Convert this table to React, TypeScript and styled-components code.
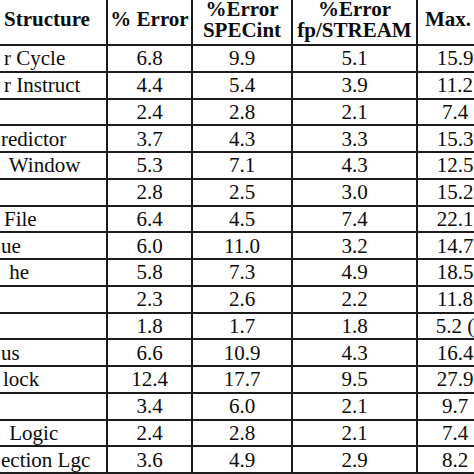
import React from "react";
import styled, { createGlobalStyle } from "styled-components";

const GlobalStyle = createGlobalStyle`
  html, body {
    margin: 0;
    padding: 0;
    background: #fff;
  }
  body {
    width: 474px;
    height: 474px;
    overflow: hidden;
  }
`;

const Page = styled.div`
  width: 474px;
  height: 474px;
  overflow: hidden;
  background: #fff;
`;

const Table = styled.table`
  border-collapse: collapse;
  table-layout: fixed;
  width: 496px;
  margin: -9px 0 0 -4px;
  font-family: "Liberation Serif", "Times New Roman", serif;
  font-size: 21px;
  color: #0c0c0c;
`;

const Head = styled.th<{ $align?: "left" | "center"; $indent?: number }>`
  height: 49px;
  padding: 2px 0 0 ${(p) => p.$indent ?? 0}px;
  border: 2px solid #1c1c1c;
  font-weight: bold;
  line-height: 21px;
  text-align: ${(p) => p.$align ?? "center"};
  vertical-align: middle;
  white-space: nowrap;
  overflow: hidden;
`;

const Row = styled.tr`
  height: 26.75px;
`;

const Cell = styled.td<{ $align?: "left" | "center"; $indent?: number }>`
  padding: 0 0 0 ${(p) => p.$indent ?? 0}px;
  border: 2px solid #1c1c1c;
  line-height: 22px;
  text-align: ${(p) => p.$align ?? "center"};
  vertical-align: middle;
  white-space: pre;
  overflow: hidden;
`;

type Entry = {
  name: string;
  indent: number;
  err: string;
  spec: string;
  fp: string;
  max: string;
};

const rows: Entry[] = [
  { name: "r Cycle", indent: 6, err: "6.8", spec: "9.9", fp: "5.1", max: "15.9" },
  { name: "r Instruct", indent: 6, err: "4.4", spec: "5.4", fp: "3.9", max: "11.2" },
  { name: "", indent: 0, err: "2.4", spec: "2.8", fp: "2.1", max: "7.4" },
  { name: "redictor", indent: 3, err: "3.7", spec: "4.3", fp: "3.3", max: "15.3" },
  { name: " Window", indent: 6, err: "5.3", spec: "7.1", fp: "4.3", max: "12.5" },
  { name: "", indent: 0, err: "2.8", spec: "2.5", fp: "3.0", max: "15.2" },
  { name: "File", indent: 6, err: "6.4", spec: "4.5", fp: "7.4", max: "22.1" },
  { name: "ue", indent: 3, err: "6.0", spec: "11.0", fp: "3.2", max: "14.7" },
  { name: " he", indent: 6, err: "5.8", spec: "7.3", fp: "4.9", max: "18.5" },
  { name: "", indent: 0, err: "2.3", spec: "2.6", fp: "2.2", max: "11.8" },
  { name: "", indent: 0, err: "1.8", spec: "1.7", fp: "1.8", max: "5.2 (" },
  { name: "us", indent: 3, err: "6.6", spec: "10.9", fp: "4.3", max: "16.4" },
  { name: "lock", indent: 5, err: "12.4", spec: "17.7", fp: "9.5", max: "27.9" },
  { name: "", indent: 0, err: "3.4", spec: "6.0", fp: "2.1", max: "9.7" },
  { name: " Logic", indent: 6, err: "2.4", spec: "2.8", fp: "2.1", max: "7.4" },
  { name: "ection Lgc", indent: 3, err: "3.6", spec: "4.9", fp: "2.9", max: "8.2" },
];

export default function App() {
  return (
    <Page>
      <GlobalStyle />
      <Table>
        <colgroup>
          <col style={{ width: 110 }} />
          <col style={{ width: 85 }} />
          <col style={{ width: 100 }} />
          <col style={{ width: 125 }} />
          <col style={{ width: 76 }} />
        </colgroup>
        <thead>
          <tr>
            <Head $align="left" $indent={6}>Structure</Head>
            <Head>% Error</Head>
            <Head>
              %Error
              <br />
              SPECint
            </Head>
            <Head>
              %Error
              <br />
              fp/STREAM
            </Head>
            <Head $align="left" $indent={7}>Max.</Head>
          </tr>
        </thead>
        <tbody>
          {rows.map((r, i) => (
            <Row key={i}>
              <Cell $align="left" $indent={r.indent}>{r.name}</Cell>
              <Cell>{r.err}</Cell>
              <Cell>{r.spec}</Cell>
              <Cell>{r.fp}</Cell>
              <Cell>{r.max}</Cell>
            </Row>
          ))}
        </tbody>
      </Table>
    </Page>
  );
}
